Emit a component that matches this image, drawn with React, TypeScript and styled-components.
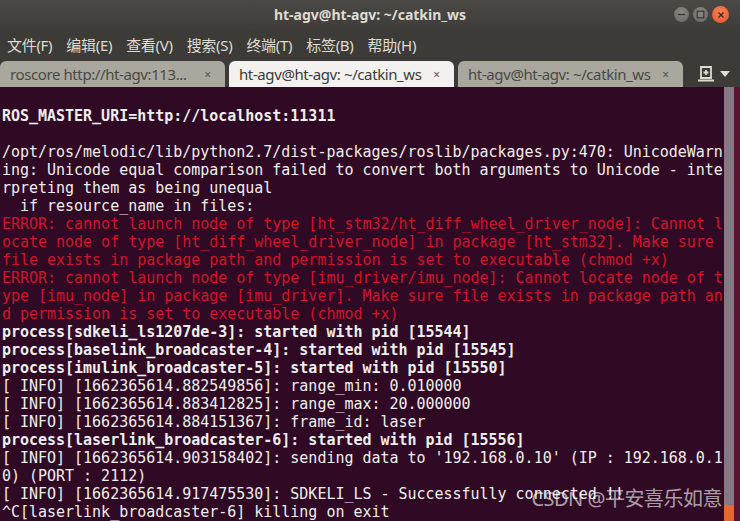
import styled, { createGlobalStyle } from "styled-components";

const GlobalStyle = createGlobalStyle`
  html, body {
    margin: 0;
    padding: 0;
    background: #3c3b37;
    overflow: hidden;
  }
`;

const Window = styled.div`
  width: 740px;
  height: 521px;
  display: flex;
  flex-direction: column;
  background: #3c3b37;
  font-family: "Noto Sans", "Noto Sans CJK SC", sans-serif;
  overflow: hidden;
`;

const TitleBar = styled.div`
  height: 30px;
  display: flex;
  align-items: center;
  justify-content: center;
  position: relative;
  background: linear-gradient(#4a4945, #3e3d39);
  color: #dfdbd2;
  font-size: 14px;
  font-weight: 700;
`;

const Controls = styled.div`
  position: absolute;
  right: 11px;
  top: 6px;
  display: flex;
  gap: 4px;
  align-items: center;
`;

const CircleButton = styled.div<{ $close?: boolean }>`
  width: ${(p) => (p.$close ? 17 : 15)}px;
  height: ${(p) => (p.$close ? 17 : 15)}px;
  border-radius: 50%;
  background: ${(p) =>
    p.$close
      ? "radial-gradient(circle at 50% 35%, #f7845a, #e4521f)"
      : "radial-gradient(circle at 50% 35%, #8a8984, #65645f)"};
  display: flex;
  align-items: center;
  justify-content: center;
`;

const MenuBar = styled.div`
  height: 30px;
  display: flex;
  align-items: center;
  gap: 14px;
  padding-left: 7px;
  color: #dfdbd2;
  font-size: 15px;
`;

const MenuItem = styled.span`
  letter-spacing: -0.3px;
`;

const TabBar = styled.div`
  height: 27px;
  display: flex;
  align-items: flex-end;
  gap: 4px;
  padding-top: 1px;
`;

const Tab = styled.div<{ $active?: boolean }>`
  width: 225px;
  height: 26px;
  box-sizing: border-box;
  display: flex;
  align-items: center;
  justify-content: space-between;
  padding: 0 14px 0 10px;
  border-radius: 6px 6px 0 0;
  background: ${(p) => (p.$active ? "#f2f1ef" : "#aaa79f")};
  color: ${(p) => (p.$active ? "#3c3b37" : "#4a4945")};
  font-size: 15px;
  white-space: nowrap;
`;

const TabLabel = styled.span`
  letter-spacing: -0.4px;
`;

const TabClose = styled.span`
  font-size: 12px;
  color: #55544f;
`;

const TabTools = styled.div`
  flex: 1;
  display: flex;
  align-items: center;
  justify-content: space-between;
  padding: 0 10px 0 10px;
  height: 26px;
`;

const Body = styled.div`
  flex: 1;
  display: flex;
  position: relative;
  background: #300a24;
`;

const Terminal = styled.div`
  flex: 1;
  padding: 2px 0 0 2px;
  font-family: "DejaVu Sans Mono", "Liberation Mono", monospace;
  font-size: 15px;
  line-height: 18px;
  color: #eeeeec;
  white-space: pre;
  overflow: hidden;
`;

const Line = styled.div<{ $kind?: "bold" | "error" }>`
  height: 18px;
  font-weight: ${(p) => (p.$kind === "bold" ? 700 : 400)};
  color: ${(p) => (p.$kind === "error" ? "#d2132a" : "#eeeeec")};
  letter-spacing: -0.02px;
`;

const Scrollbar = styled.div`
  width: 10px;
  display: flex;
  flex-direction: column;
  justify-content: flex-end;
  background: #877684;
`;

const Thumb = styled.div`
  height: 16px;
  background: #e4692e;
`;

const Edge = styled.div`
  width: 6px;
  background: #5c1231;
`;

const Watermark = styled.div`
  position: absolute;
  right: 18px;
  bottom: 9px;
  font-family: "Noto Sans", "Noto Sans CJK SC", sans-serif;
  font-size: 20px;
  color: rgba(255, 255, 255, 0.62);
  letter-spacing: -0.5px;
`;

type Kind = "bold" | "error" | undefined;

const lines: [string, Kind][] = [
  ["", undefined],
  ["ROS_MASTER_URI=http://localhost:11311", "bold"],
  ["", undefined],
  ["/opt/ros/melodic/lib/python2.7/dist-packages/roslib/packages.py:470: UnicodeWarn", undefined],
  ["ing: Unicode equal comparison failed to convert both arguments to Unicode - inte", undefined],
  ["rpreting them as being unequal", undefined],
  ["  if resource_name in files:", undefined],
  ["ERROR: cannot launch node of type [ht_stm32/ht_diff_wheel_driver_node]: Cannot l", "error"],
  ["ocate node of type [ht_diff_wheel_driver_node] in package [ht_stm32]. Make sure ", "error"],
  ["file exists in package path and permission is set to executable (chmod +x)", "error"],
  ["ERROR: cannot launch node of type [imu_driver/imu_node]: Cannot locate node of t", "error"],
  ["ype [imu_node] in package [imu_driver]. Make sure file exists in package path an", "error"],
  ["d permission is set to executable (chmod +x)", "error"],
  ["process[sdkeli_ls1207de-3]: started with pid [15544]", "bold"],
  ["process[baselink_broadcaster-4]: started with pid [15545]", "bold"],
  ["process[imulink_broadcaster-5]: started with pid [15550]", "bold"],
  ["[ INFO] [1662365614.882549856]: range_min: 0.010000", undefined],
  ["[ INFO] [1662365614.883412825]: range_max: 20.000000", undefined],
  ["[ INFO] [1662365614.884151367]: frame_id: laser", undefined],
  ["process[laserlink_broadcaster-6]: started with pid [15556]", "bold"],
  ["[ INFO] [1662365614.903158402]: sending data to '192.168.0.10' (IP : 192.168.0.1", undefined],
  ["0) (PORT : 2112)", undefined],
  ["[ INFO] [1662365614.917475530]: SDKELI_LS - Successfully connected !!", undefined],
  ["^C[laserlink_broadcaster-6] killing on exit", undefined],
];

const menus = ["文件(F)", "编辑(E)", "查看(V)", "搜索(S)", "终端(T)", "标签(B)", "帮助(H)"];

const tabs = [
  { label: "roscore http://ht-agv:113...", active: false },
  { label: "ht-agv@ht-agv: ~/catkin_ws", active: true },
  { label: "ht-agv@ht-agv: ~/catkin_ws", active: false },
];

function App() {
  return (
    <Window>
      <GlobalStyle />
      <TitleBar>
        ht-agv@ht-agv: ~/catkin_ws
        <Controls>
          <CircleButton>
            <svg width="9" height="9" viewBox="0 0 9 9">
              <line x1="1" y1="4.5" x2="8" y2="4.5" stroke="#3a3935" strokeWidth="1.4" />
            </svg>
          </CircleButton>
          <CircleButton>
            <svg width="9" height="9" viewBox="0 0 9 9">
              <rect x="1.2" y="1.2" width="6.6" height="6.6" fill="none" stroke="#3a3935" strokeWidth="1.2" />
            </svg>
          </CircleButton>
          <CircleButton $close>
            <svg width="8" height="8" viewBox="0 0 8 8">
              <path d="M1.5 1.5 L6.5 6.5 M6.5 1.5 L1.5 6.5" stroke="#3a2a22" strokeWidth="1.4" />
            </svg>
          </CircleButton>
        </Controls>
      </TitleBar>
      <MenuBar>
        {menus.map((m) => (
          <MenuItem key={m}>{m}</MenuItem>
        ))}
      </MenuBar>
      <TabBar>
        {tabs.map((t, i) => (
          <Tab key={i} $active={t.active}>
            <TabLabel>{t.label}</TabLabel>
            <TabClose>×</TabClose>
          </Tab>
        ))}
        <TabTools>
          <svg width="18" height="18" viewBox="0 0 18 18">
            <path d="M4 2 H14 V13 H4 Z" fill="none" stroke="#dfdbd2" strokeWidth="1.8" />
            <path d="M1 15.5 H17" stroke="#dfdbd2" strokeWidth="2" />
            <path d="M9 5 V10 M6.5 7.5 H11.5" stroke="#dfdbd2" strokeWidth="1.8" />
          </svg>
          <svg width="10" height="6" viewBox="0 0 10 6">
            <path d="M0 0 H10 L5 6 Z" fill="#dfdbd2" />
          </svg>
        </TabTools>
      </TabBar>
      <Body>
        <Terminal>
          {lines.map(([text, kind], i) => (
            <Line key={i} $kind={kind}>
              {text}
            </Line>
          ))}
        </Terminal>
        <Scrollbar>
          <Thumb />
        </Scrollbar>
        <Edge />
        <Watermark>CSDN @平安喜乐如意</Watermark>
      </Body>
    </Window>
  );
}

export default App;
